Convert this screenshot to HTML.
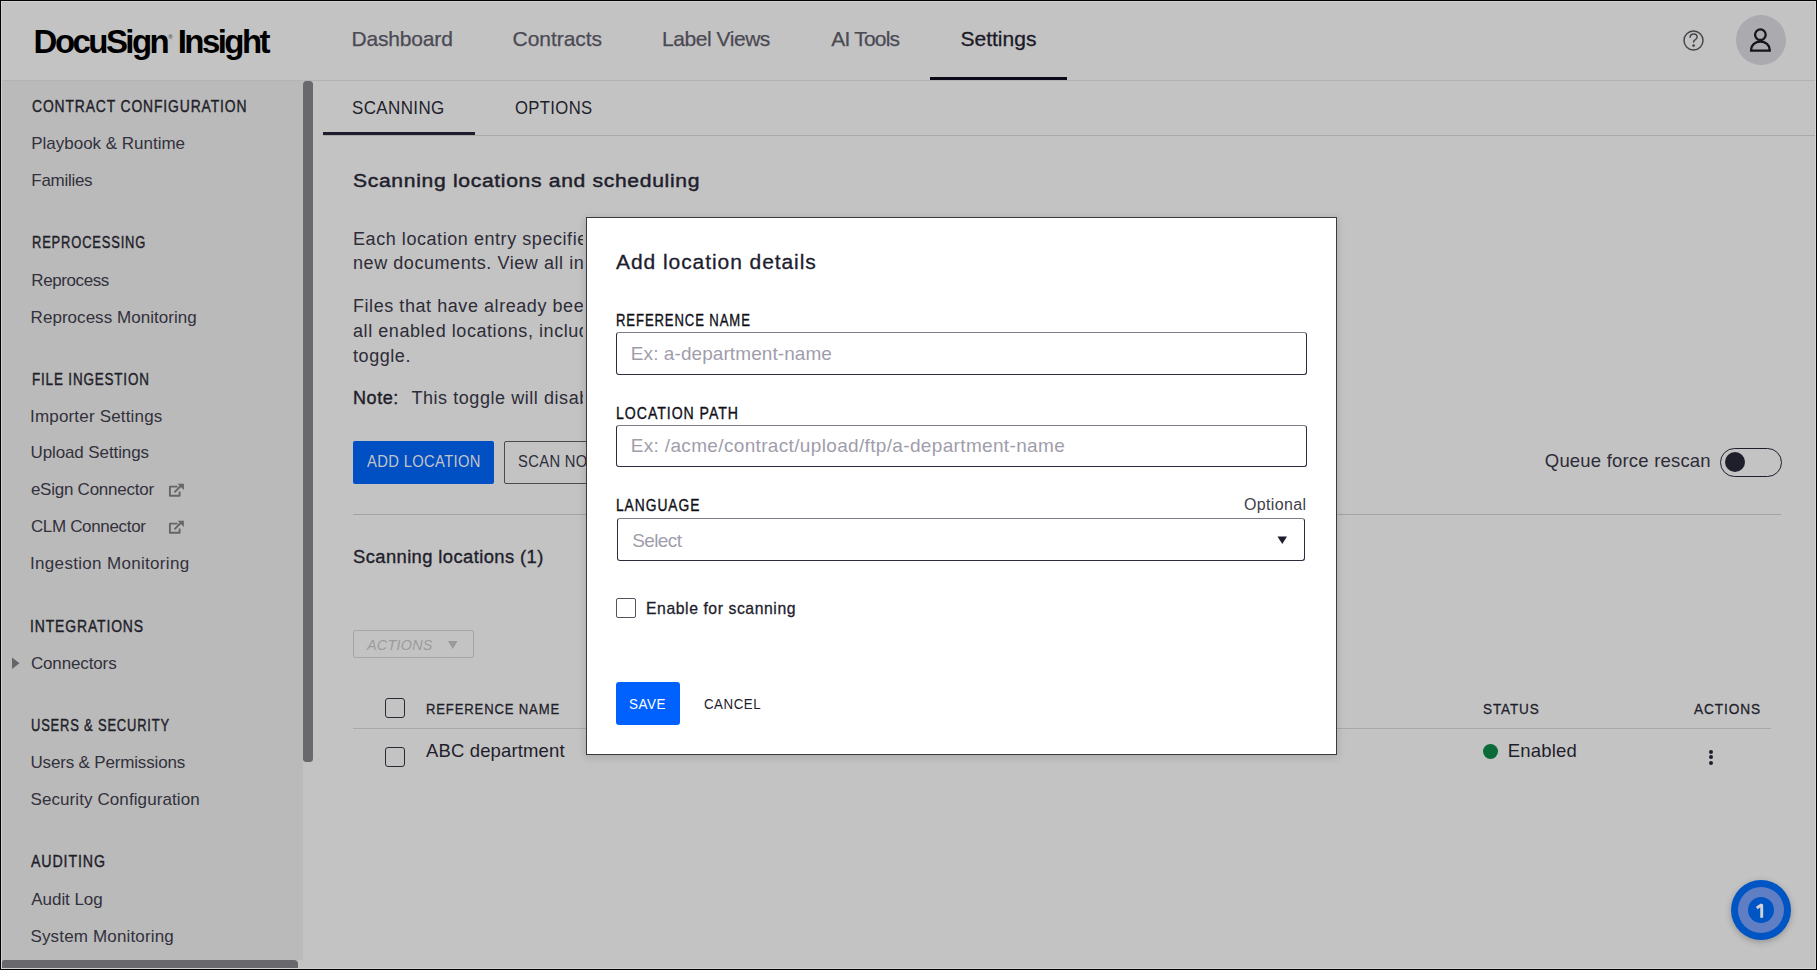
<!DOCTYPE html>
<html><head><meta charset="utf-8"><title>DocuSign Insight</title>
<style>
html,body{margin:0;padding:0;width:1817px;height:970px;overflow:hidden;background:#c3c3c3}
body{position:relative;font-family:"Liberation Sans",sans-serif}
.t{position:absolute;line-height:1;white-space:nowrap}
.r{position:absolute}
</style></head><body>
<div class="r" style="left:0px;top:0px;width:1817px;height:970px;background:#c3c3c3"></div>
<div class="r" style="left:1px;top:81px;width:302px;height:879px;background:#bababa"></div>
<div class="r" style="left:1px;top:80px;width:1816px;height:1px;background:#b3b3b3"></div>
<div class="t" id="logo" style="left:33.6px;top:25.06px;font-size:33px;color:#000;font-weight:700;letter-spacing:-2.550px;">DocuSign<span style="font-size:6px;vertical-align:top;position:relative;top:9px;color:#555;margin:0 1px">&reg;</span> Insight</div>
<div class="t" id="nav1" style="left:351.46px;top:28.22px;font-size:21px;color:#4b4a55;-webkit-text-stroke:0.25px;letter-spacing:-0.170px;">Dashboard</div>
<div class="t" id="nav2" style="left:512.58px;top:28.22px;font-size:21px;color:#4b4a55;-webkit-text-stroke:0.25px;letter-spacing:-0.045px;">Contracts</div>
<div class="t" id="nav3" style="left:662.02px;top:28.22px;font-size:21px;color:#4b4a55;-webkit-text-stroke:0.25px;letter-spacing:-0.450px;">Label Views</div>
<div class="t" id="nav4" style="left:831.35px;top:28.22px;font-size:21px;color:#4b4a55;-webkit-text-stroke:0.25px;letter-spacing:-0.792px;">AI Tools</div>
<div class="t" id="nav5" style="left:960.44px;top:28.22px;font-size:21px;color:#1b1a28;-webkit-text-stroke:0.3px;letter-spacing:0.014px;">Settings</div>
<div class="r" style="left:930px;top:77px;width:137px;height:3px;background:#0b0a18"></div>
<div class="r" style="left:1736px;top:15px;width:50px;height:50px;background:#aaaaaf;border-radius:50%"></div>
<svg class="r" style="left:1670px;top:20px" width="120" height="40" viewBox="0 0 120 40"><circle cx="23.5" cy="20.5" r="9.5" fill="none" stroke="#45454b" stroke-width="1.45"/><path d="M20.1 17.3c0-2.1 1.5-3.3 3.5-3.3s3.5 1.3 3.5 3.1c0 1.6-1 2.2-2 2.8-.9.6-1.5 1.1-1.5 2.0" fill="none" stroke="#45454b" stroke-width="1.5" stroke-linecap="round"/><circle cx="23.6" cy="25.6" r="1.3" fill="#45454b"/><circle cx="90.4" cy="14.7" r="5.3" fill="none" stroke="#16151d" stroke-width="2.3"/><path d="M81.1 30.7V29.8A9.3 8.3 0 0 1 99.7 29.8V30.7Z" fill="none" stroke="#16151d" stroke-width="2.3"/></svg>
<div class="t" id="sh1" style="left:31.5px;top:98.65px;font-size:16px;color:#1f1e2a;-webkit-text-stroke:0.4px;letter-spacing:1.000px;transform:scaleX(0.8678);transform-origin:0 0;">CONTRACT CONFIGURATION</div>
<div class="t" id="si1" style="left:31.3px;top:134.61px;font-size:17px;color:#32313c;letter-spacing:-0.019px;">Playbook &amp; Runtime</div>
<div class="t" id="si3" style="left:31.3px;top:171.61px;font-size:17px;color:#32313c;letter-spacing:-0.285px;">Families</div>
<div class="t" id="sh2" style="left:31.5px;top:234.95px;font-size:16px;color:#1f1e2a;-webkit-text-stroke:0.4px;letter-spacing:1.000px;transform:scaleX(0.8100);transform-origin:0 0;">REPROCESSING</div>
<div class="t" id="si4" style="left:31.3px;top:271.91px;font-size:17px;color:#32313c;letter-spacing:-0.400px;">Reprocess</div>
<div class="t" id="si2" style="left:30.6px;top:308.71px;font-size:17px;color:#32313c;letter-spacing:0.039px;">Reprocess Monitoring</div>
<div class="t" id="sh3" style="left:31.5px;top:371.95px;font-size:16px;color:#1f1e2a;-webkit-text-stroke:0.4px;letter-spacing:1.000px;transform:scaleX(0.8398);transform-origin:0 0;">FILE INGESTION</div>
<div class="t" id="si5" style="left:30.04px;top:407.61px;font-size:17px;color:#32313c;letter-spacing:0.176px;">Importer Settings</div>
<div class="t" id="si6" style="left:30.46px;top:444.31px;font-size:17px;color:#32313c;letter-spacing:-0.101px;">Upload Settings</div>
<div class="t" id="si7" style="left:30.88px;top:481.41px;font-size:17px;color:#32313c;letter-spacing:-0.244px;">eSign Connector</div>
<div class="t" id="si8" style="left:30.88px;top:518.41px;font-size:17px;color:#32313c;letter-spacing:-0.334px;">CLM Connector</div>
<div class="t" id="si9" style="left:30.04px;top:555.41px;font-size:17px;color:#32313c;letter-spacing:0.316px;">Ingestion Monitoring</div>
<div class="t" id="sh4" style="left:30.24px;top:619.15px;font-size:16px;color:#1f1e2a;-webkit-text-stroke:0.4px;letter-spacing:1.000px;transform:scaleX(0.8712);transform-origin:0 0;">INTEGRATIONS</div>
<div class="t" id="si10" style="left:30.88px;top:655.11px;font-size:17px;color:#32313c;letter-spacing:-0.130px;">Connectors</div>
<div class="t" id="sh5" style="left:31.08px;top:717.65px;font-size:16px;color:#1f1e2a;-webkit-text-stroke:0.4px;letter-spacing:1.000px;transform:scaleX(0.8097);transform-origin:0 0;">USERS &amp; SECURITY</div>
<div class="t" id="si11" style="left:30.46px;top:754.41px;font-size:17px;color:#32313c;letter-spacing:-0.167px;">Users &amp; Permissions</div>
<div class="t" id="si12" style="left:30.46px;top:791.21px;font-size:17px;color:#32313c;letter-spacing:0.095px;">Security Configuration</div>
<div class="t" id="sh6" style="left:31.08px;top:854.05px;font-size:16px;color:#1f1e2a;-webkit-text-stroke:0.4px;letter-spacing:1.000px;transform:scaleX(0.8868);transform-origin:0 0;">AUDITING</div>
<div class="t" id="si13" style="left:31.3px;top:890.81px;font-size:17px;color:#32313c;letter-spacing:-0.050px;">Audit Log</div>
<div class="t" id="si14" style="left:30.46px;top:927.61px;font-size:17px;color:#32313c;letter-spacing:0.160px;">System Monitoring</div>
<svg class="r" style="left:168px;top:483px" width="17" height="15" viewBox="0 0 17 15"><path d="M9.6 3.6H1.9V12.8H11.6V8.4" fill="none" stroke="#666" stroke-width="1.9" stroke-linejoin="round"/><path d="M6.4 9.3L13.2 2.5" stroke="#666" stroke-width="1.9"/><path d="M9.6 0.7H15.9V7z" fill="#666"/></svg>
<svg class="r" style="left:168px;top:520px" width="17" height="15" viewBox="0 0 17 15"><path d="M9.6 3.6H1.9V12.8H11.6V8.4" fill="none" stroke="#666" stroke-width="1.9" stroke-linejoin="round"/><path d="M6.4 9.3L13.2 2.5" stroke="#666" stroke-width="1.9"/><path d="M9.6 0.7H15.9V7z" fill="#666"/></svg>
<svg class="r" style="left:12px;top:657px" width="9" height="13" viewBox="0 0 9 13"><path d="M0 0.5L7.5 6.3L0 12z" fill="#666"/></svg>
<div class="r" style="left:303px;top:81px;width:10px;height:681px;background:#69696d;border-radius:3.5px"></div>
<div class="r" style="left:2px;top:960px;width:296px;height:8px;background:#69696d;border-radius:2px 4px 0 0"></div>
<div class="t" id="tab1" style="left:352.02px;top:99.34px;font-size:18.5px;color:#1f1e2b;letter-spacing:0.400px;transform:scaleX(0.9184);transform-origin:0 0;">SCANNING</div>
<div class="t" id="tab2" style="left:515px;top:99.34px;font-size:18.5px;color:#1f1e2b;letter-spacing:0.400px;transform:scaleX(0.9016);transform-origin:0 0;">OPTIONS</div>
<div class="r" style="left:323px;top:135px;width:1493px;height:1px;background:#a9a9a9"></div>
<div class="r" style="left:323px;top:132px;width:152px;height:3px;background:#1e1d2d"></div>
<div class="t" id="h1" style="left:352.93px;top:172.28px;font-size:18.8px;color:#1f1e2c;-webkit-text-stroke:0.45px;letter-spacing:0.600px;transform:scaleX(1.1232);transform-origin:0 0;">Scanning locations and scheduling</div>
<div class="t" style="left:353px;top:229.56px;font-size:18px;color:#2d2c38;letter-spacing:0.560px;width:230px;height:24px;overflow:hidden;">Each location entry specifies a folder path that is periodically scanned for</div>
<div class="t" id="p2" style="left:353px;top:254.26px;font-size:18px;color:#2d2c38;letter-spacing:0.560px;">new documents. View all in</div>
<div class="t" style="left:353px;top:297.06px;font-size:18px;color:#2d2c38;letter-spacing:0.560px;width:230px;height:24px;overflow:hidden;">Files that have already been scanned will not be rescanned. Queue force rescan will re-scan</div>
<div class="t" style="left:353px;top:322.16px;font-size:18px;color:#2d2c38;letter-spacing:0.560px;width:230px;height:24px;overflow:hidden;">all enabled locations, including files scanned before, when enabled via the</div>
<div class="t" style="left:353px;top:347.36px;font-size:18px;color:#2d2c38;letter-spacing:0.560px;">toggle.</div>
<div class="t" style="left:353px;top:388.76px;font-size:18px;color:#2d2c38;letter-spacing:0.560px;"><span style="color:#1e1d2a;-webkit-text-stroke:0.4px">Note:</span></div>
<div class="t" style="left:411.4px;top:388.76px;font-size:18px;color:#2d2c38;letter-spacing:0.560px;width:172px;height:24px;overflow:hidden;">This toggle will disable</div>
<div class="r" style="left:353px;top:441px;width:141px;height:43px;background:#0050c4;border-radius:2px"></div>
<div class="t" id="btn1" style="left:366.6px;top:454.15px;font-size:16px;color:#c4c4c4;letter-spacing:0.400px;transform:scaleX(0.9206);transform-origin:0 0;">ADD LOCATION</div>
<div class="r" style="left:504px;top:441px;width:140px;height:43px;border:1.5px solid #4a4a50;border-radius:2px;box-sizing:border-box"></div>
<div class="t" style="left:518px;top:454.15px;font-size:16px;color:#2d2c38;letter-spacing:0.400px;transform:scaleX(0.9206);transform-origin:0 0;">SCAN NOW</div>
<div class="t" id="qfr" style="left:1544.81px;top:452.04px;font-size:18.5px;color:#2d2c38;letter-spacing:0.198px;">Queue force rescan</div>
<div class="r" style="left:1720px;top:448px;width:62px;height:29px;border:1.6px solid #1f1e2b;border-radius:15px;box-sizing:border-box"></div>
<div class="r" style="left:1725px;top:452px;width:20px;height:20px;background:#1f1e2b;border-radius:50%"></div>
<div class="r" style="left:353px;top:514px;width:1428px;height:1px;background:#a3a3a3"></div>
<div class="t" id="h2" style="left:353px;top:548.08px;font-size:18.8px;color:#1f1e2c;-webkit-text-stroke:0.35px;letter-spacing:0.400px;transform:scaleX(0.9798);transform-origin:0 0;">Scanning locations (1)</div>
<div class="r" style="left:353px;top:630px;width:121px;height:28px;border:1px solid #a5a5a5;border-radius:2px;box-sizing:border-box"></div>
<div class="t" id="act" style="left:367.4px;top:636.78px;font-size:15.5px;color:#9c9c9c;letter-spacing:0.300px;font-style:italic;transform:scaleX(0.9236);transform-origin:0 0;">ACTIONS</div>
<svg class="r" style="left:448px;top:641px" width="10" height="9" viewBox="0 0 10 9"><path d="M0 0H9.5L4.75 8z" fill="#9a9a9a"/></svg>
<div class="r" style="left:385px;top:698px;width:20px;height:20px;border:1.6px solid #2a2a33;border-radius:3px;box-sizing:border-box"></div>
<div class="t" id="th1" style="left:426px;top:700.88px;font-size:15.5px;color:#1f1e2b;-webkit-text-stroke:0.3px;letter-spacing:1.000px;transform:scaleX(0.8443);transform-origin:0 0;">REFERENCE NAME</div>
<div class="t" id="th2" style="left:1483.2px;top:700.58px;font-size:15.5px;color:#1f1e2b;-webkit-text-stroke:0.3px;letter-spacing:1.000px;transform:scaleX(0.8730);transform-origin:0 0;">STATUS</div>
<div class="t" id="th3" style="left:1694px;top:700.58px;font-size:15.5px;color:#1f1e2b;-webkit-text-stroke:0.3px;letter-spacing:1.000px;transform:scaleX(0.8820);transform-origin:0 0;">ACTIONS</div>
<div class="r" style="left:353px;top:728px;width:1418px;height:1px;background:#a8a8a8"></div>
<div class="r" style="left:385px;top:747px;width:20px;height:20px;border:1.6px solid #2a2a33;border-radius:3px;box-sizing:border-box"></div>
<div class="t" id="abc" style="left:426px;top:742.24px;font-size:18.5px;color:#1f1e2b;letter-spacing:0.136px;">ABC department</div>
<div class="r" style="left:1483px;top:744px;width:15px;height:15px;background:#0a6b38;border-radius:50%"></div>
<div class="t" id="en" style="left:1507.79px;top:741.54px;font-size:18.5px;color:#1f1e2b;letter-spacing:0.167px;">Enabled</div>
<div class="r" style="left:1709px;top:749.6px;width:4px;height:4px;background:#1f1e2b;border-radius:50%"></div>
<div class="r" style="left:1709px;top:755px;width:4px;height:4px;background:#1f1e2b;border-radius:50%"></div>
<div class="r" style="left:1709px;top:760.5px;width:4px;height:4px;background:#1f1e2b;border-radius:50%"></div>
<div class="r" style="left:1731px;top:880px;width:60px;height:60px;border-radius:50%;background:#0055c4;box-shadow:0 2px 6px rgba(0,0,0,.25)"></div>
<div class="r" style="left:1738px;top:887px;width:46px;height:46px;border-radius:50%;background:#5f7ec4"></div>
<div class="r" style="left:1748px;top:897px;width:26px;height:26px;border-radius:50%;background:#0055c4"></div>
<svg class="r" style="left:1750px;top:898px" width="20" height="24" viewBox="0 0 20 24"><path d="M6.8 10L11.7 6.6V19.8" fill="none" stroke="#d3d3d6" stroke-width="2.9" stroke-linejoin="bevel"/></svg>
<div class="r" style="left:586px;top:217px;width:751px;height:538px;background:#fff;border:1px solid #3a3a3a;box-sizing:border-box;box-shadow:0 2px 8px 1px rgba(0,0,0,.12)"></div>
<div class="t" id="mt" style="left:616.15px;top:252.04px;font-size:20.5px;color:#1e1d2e;-webkit-text-stroke:0.3px;letter-spacing:0.900px;transform:scaleX(1.0253);transform-origin:0 0;">Add location details</div>
<div class="t" id="l1" style="left:616.15px;top:312.65px;font-size:16px;color:#0f0f17;-webkit-text-stroke:0.35px;letter-spacing:1.100px;transform:scaleX(0.8181);transform-origin:0 0;">REFERENCE NAME</div>
<div class="r" style="left:616px;top:332px;width:691px;height:43px;border:1.5px solid #2c2b3e;border-top-color:#7d7c88;border-radius:3px;box-sizing:border-box"></div>
<div class="t" id="ph1" style="left:630.84px;top:343.71px;font-size:19px;color:#9f9dab;letter-spacing:0.075px;">Ex: a-department-name</div>
<div class="t" id="l2" style="left:616.08px;top:405.75px;font-size:16px;color:#0f0f17;-webkit-text-stroke:0.35px;letter-spacing:1.100px;transform:scaleX(0.8806);transform-origin:0 0;">LOCATION PATH</div>
<div class="r" style="left:616px;top:425px;width:691px;height:42px;border:1.5px solid #2c2b3e;border-top-color:#7d7c88;border-radius:3px;box-sizing:border-box"></div>
<div class="t" id="ph2" style="left:630.7px;top:435.71px;font-size:19px;color:#9f9dab;letter-spacing:0.344px;">Ex: /acme/contract/upload/ftp/a-department-name</div>
<div class="t" id="l3" style="left:616.01px;top:497.85px;font-size:16px;color:#0f0f17;-webkit-text-stroke:0.35px;letter-spacing:1.100px;transform:scaleX(0.8626);transform-origin:0 0;">LANGUAGE</div>
<div class="t" id="opt" style="left:1244px;top:497.45px;font-size:16px;color:#3f3e4a;letter-spacing:0.343px;">Optional</div>
<div class="r" style="left:617px;top:518px;width:688px;height:43px;border:1.5px solid #2c2b3e;border-top-color:#7d7c88;border-radius:3px;box-sizing:border-box"></div>
<div class="t" id="sel" style="left:632.13px;top:530.91px;font-size:19px;color:#9f9dab;letter-spacing:-0.600px;">Select</div>
<svg class="r" style="left:1277px;top:536px" width="11" height="9" viewBox="0 0 11 9"><path d="M0.5 0.5H10L5.25 8z" fill="#1e1d2e"/></svg>
<div class="r" style="left:616px;top:598px;width:20px;height:20px;border:1.5px solid #55545e;border-radius:2px;box-sizing:border-box"></div>
<div class="t" id="ena" style="left:645.96px;top:599.61px;font-size:17px;color:#1e1d2e;-webkit-text-stroke:0.3px;letter-spacing:0.600px;transform:scaleX(0.9283);transform-origin:0 0;">Enable for scanning</div>
<div class="r" style="left:616px;top:682px;width:64px;height:43px;background:#0061fe;border-radius:3px"></div>
<div class="t" id="save" style="left:629.14px;top:695.58px;font-size:15.5px;color:#fff;letter-spacing:0.600px;transform:scaleX(0.8675);transform-origin:0 0;">SAVE</div>
<div class="t" id="cancel" style="left:704.15px;top:695.58px;font-size:15.5px;color:#1e1d2e;letter-spacing:0.600px;transform:scaleX(0.8584);transform-origin:0 0;">CANCEL</div>
<div class="r" style="left:0;top:0;width:1817px;height:970px;border:1px solid #000;box-sizing:border-box;box-shadow:inset 0 0 0 1px #d2d2d2"></div>
</body></html>
